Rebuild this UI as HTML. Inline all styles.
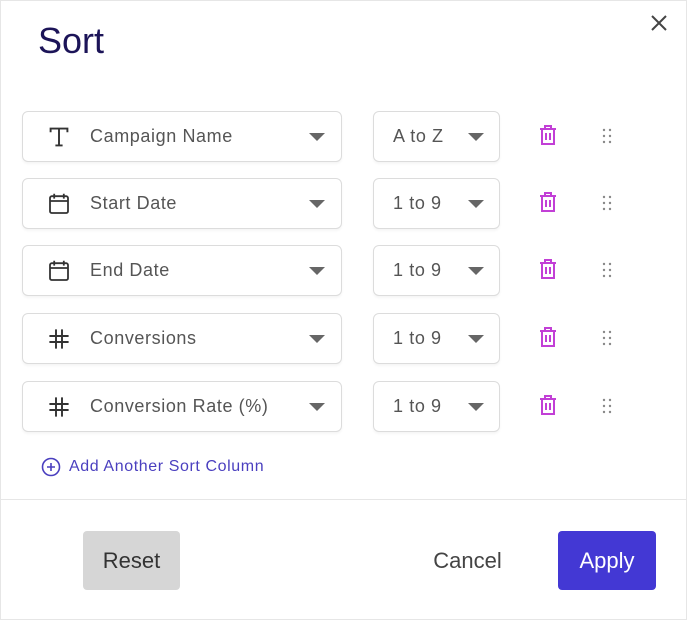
<!DOCTYPE html>
<html><head><style>
*{box-sizing:border-box;margin:0;padding:0}
body{width:687px;height:620px;background:#fff;font-family:"Liberation Sans",sans-serif;position:relative;overflow:hidden}
.bd{position:absolute;left:0;top:0;width:687px;height:620px;border:1px solid #e6e6e6;pointer-events:none}
.t{position:absolute;left:38px;top:20px;font-size:36px;color:#1c1458;font-weight:500}
.x{position:absolute;left:650px;top:14px}
.sel{position:absolute;height:51px;border:1px solid #dcdcdc;border-radius:6px;background:#fff;box-shadow:0 2px 2px rgba(0,0,0,0.04)}
.f{left:22px;width:320px}
.o{left:373px;width:127px}
.lbl{position:absolute;top:14px;font-size:18px;color:#555;letter-spacing:0.6px}
.f .lbl{left:67px}
.o .lbl{left:19px}
.car{position:absolute;top:21px;width:0;height:0;border-left:8px solid transparent;border-right:8px solid transparent;border-top:8px solid #666}
.f .car{left:286px}.o .car{left:94px}
.ic{position:absolute;left:24px;top:13px}
.tr{position:absolute;left:539px}
.dr{position:absolute;left:602px}
.add{position:absolute;left:41px;top:457px;font-size:16px;letter-spacing:0.6px;color:#4a3fbf;display:flex;align-items:center;gap:8px}
.hr{position:absolute;left:0;right:0;top:499px;border-top:1px solid #e6e6e6}
.btn{position:absolute;top:531px;height:59px;border-radius:4px;font-size:22px;display:flex;align-items:center;justify-content:center}
</style></head><body>
<div class="bd"></div>
<div class="t">Sort</div>
<svg class="x" width="18" height="18" viewBox="0 0 18 18"><path d="M2 2L16 16M16 2L2 16" stroke="#444" stroke-width="2"/></svg>

<div class="sel f" style="top:111px"><svg class="ic" width="24" height="24" viewBox="0 0 20 20"><path d="M3 6V3h14v3M10 3v14M7 17h6" stroke="#333" stroke-width="1.6" fill="none"/></svg><span class="lbl">Campaign Name</span><span class="car"></span></div>
<div class="sel o" style="top:111px"><span class="lbl">A to Z</span><span class="car"></span></div>

<div class="sel f" style="top:178px"><svg class="ic" width="24" height="24" viewBox="0 0 20 20"><rect x="2.5" y="3.5" width="15" height="14" rx="1.5" stroke="#333" stroke-width="1.5" fill="none"/><path d="M2.5 7.5h15M6 1.5v4M14 1.5v4" stroke="#333" stroke-width="1.5"/></svg><span class="lbl">Start Date</span><span class="car"></span></div>
<div class="sel o" style="top:178px"><span class="lbl">1 to 9</span><span class="car"></span></div>

<div class="sel f" style="top:245px"><svg class="ic" width="24" height="24" viewBox="0 0 20 20"><rect x="2.5" y="3.5" width="15" height="14" rx="1.5" stroke="#333" stroke-width="1.5" fill="none"/><path d="M2.5 7.5h15M6 1.5v4M14 1.5v4" stroke="#333" stroke-width="1.5"/></svg><span class="lbl">End Date</span><span class="car"></span></div>
<div class="sel o" style="top:245px"><span class="lbl">1 to 9</span><span class="car"></span></div>

<div class="sel f" style="top:313px"><svg class="ic" width="24" height="24" viewBox="0 0 20 20"><path d="M7.5 2v16M12.5 2v16M2 7.5h16M2 12.5h16" stroke="#333" stroke-width="1.6"/></svg><span class="lbl">Conversions</span><span class="car"></span></div>
<div class="sel o" style="top:313px"><span class="lbl">1 to 9</span><span class="car"></span></div>

<div class="sel f" style="top:381px"><svg class="ic" width="24" height="24" viewBox="0 0 20 20"><path d="M7.5 2v16M12.5 2v16M2 7.5h16M2 12.5h16" stroke="#333" stroke-width="1.6"/></svg><span class="lbl">Conversion Rate (%)</span><span class="car"></span></div>
<div class="sel o" style="top:381px"><span class="lbl">1 to 9</span><span class="car"></span></div>

<svg class="tr" style="top:124px" width="18" height="22" viewBox="0 0 18 22"><path d="M1 5h16M6 5V2h6v3M3 5v15h12V5M7 9v7M11 9v7" stroke="#c23fd6" stroke-width="2" fill="none"/></svg>
<svg class="tr" style="top:191px" width="18" height="22" viewBox="0 0 18 22"><path d="M1 5h16M6 5V2h6v3M3 5v15h12V5M7 9v7M11 9v7" stroke="#c23fd6" stroke-width="2" fill="none"/></svg>
<svg class="tr" style="top:258px" width="18" height="22" viewBox="0 0 18 22"><path d="M1 5h16M6 5V2h6v3M3 5v15h12V5M7 9v7M11 9v7" stroke="#c23fd6" stroke-width="2" fill="none"/></svg>
<svg class="tr" style="top:326px" width="18" height="22" viewBox="0 0 18 22"><path d="M1 5h16M6 5V2h6v3M3 5v15h12V5M7 9v7M11 9v7" stroke="#c23fd6" stroke-width="2" fill="none"/></svg>
<svg class="tr" style="top:394px" width="18" height="22" viewBox="0 0 18 22"><path d="M1 5h16M6 5V2h6v3M3 5v15h12V5M7 9v7M11 9v7" stroke="#c23fd6" stroke-width="2" fill="none"/></svg>

<svg class="dr" style="top:128px" width="10" height="16"><g fill="#888"><circle cx="2" cy="2" r="1.2"/><circle cx="8" cy="2" r="1.2"/><circle cx="2" cy="8" r="1.2"/><circle cx="8" cy="8" r="1.2"/><circle cx="2" cy="14" r="1.2"/><circle cx="8" cy="14" r="1.2"/></g></svg>
<svg class="dr" style="top:195px" width="10" height="16"><g fill="#888"><circle cx="2" cy="2" r="1.2"/><circle cx="8" cy="2" r="1.2"/><circle cx="2" cy="8" r="1.2"/><circle cx="8" cy="8" r="1.2"/><circle cx="2" cy="14" r="1.2"/><circle cx="8" cy="14" r="1.2"/></g></svg>
<svg class="dr" style="top:262px" width="10" height="16"><g fill="#888"><circle cx="2" cy="2" r="1.2"/><circle cx="8" cy="2" r="1.2"/><circle cx="2" cy="8" r="1.2"/><circle cx="8" cy="8" r="1.2"/><circle cx="2" cy="14" r="1.2"/><circle cx="8" cy="14" r="1.2"/></g></svg>
<svg class="dr" style="top:330px" width="10" height="16"><g fill="#888"><circle cx="2" cy="2" r="1.2"/><circle cx="8" cy="2" r="1.2"/><circle cx="2" cy="8" r="1.2"/><circle cx="8" cy="8" r="1.2"/><circle cx="2" cy="14" r="1.2"/><circle cx="8" cy="14" r="1.2"/></g></svg>
<svg class="dr" style="top:398px" width="10" height="16"><g fill="#888"><circle cx="2" cy="2" r="1.2"/><circle cx="8" cy="2" r="1.2"/><circle cx="2" cy="8" r="1.2"/><circle cx="8" cy="8" r="1.2"/><circle cx="2" cy="14" r="1.2"/><circle cx="8" cy="14" r="1.2"/></g></svg>

<div class="add"><svg width="20" height="20" viewBox="0 0 20 20"><circle cx="10" cy="10" r="8.5" stroke="#4a3fbf" stroke-width="1.6" fill="none"/><path d="M10 6v8M6 10h8" stroke="#4a3fbf" stroke-width="1.6"/></svg>Add Another Sort Column</div>
<div class="hr"></div>
<div class="btn" style="left:83px;width:97px;background:#d6d6d6;color:#333">Reset</div>
<div class="btn" style="left:425px;width:85px;color:#444">Cancel</div>
<div class="btn" style="left:558px;width:98px;background:#4338d4;color:#fff">Apply</div>
</body></html>
